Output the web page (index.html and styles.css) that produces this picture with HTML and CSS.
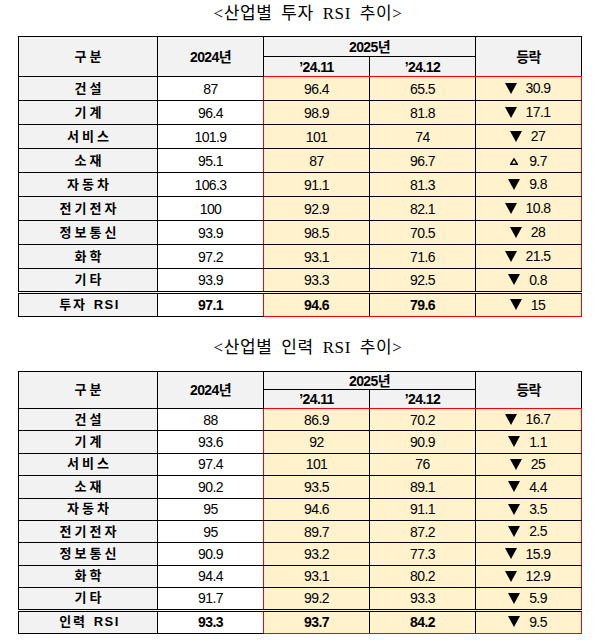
FILE: index.html
```html
<!DOCTYPE html>
<html lang="ko">
<head>
<meta charset="utf-8">
<title>산업별 RSI 추이</title>
<link rel="stylesheet" href="styles.css">
</head>
<body>
<div class="page">
  <section class="block first">
    <h2 class="title">&lt;산업별 투자 RSI 추이&gt;</h2>
    <table class="rsi t1">
      <colgroup><col class="c-lab"><col class="c-num"><col class="c-num"><col class="c-num"><col class="c-num"></colgroup>
      <thead>
        <tr class="h1">
          <th rowspan="2" class="lab">구분</th>
          <th rowspan="2" class="pre">2024년</th>
          <th colspan="2">2025년</th>
          <th rowspan="2" class="chg hb">등락</th>
        </tr>
        <tr class="h2">
          <th class="hb yl">’24.11</th>
          <th class="hb">’24.12</th>
        </tr>
      </thead>
      <tbody>
        <tr class="first-row"><td class="lab">건설</td><td class="pre">87</td><td class="y yl">96.4</td><td class="y">65.5</td><td class="y chg"><span class="d"><svg class="dn" viewBox="0 0 12 11"><path d="M0 0H12L6 11Z"/></svg>30.9</span></td></tr>
        <tr><td class="lab">기계</td><td class="pre">96.4</td><td class="y yl">98.9</td><td class="y">81.8</td><td class="y chg"><span class="d"><svg class="dn" viewBox="0 0 12 11"><path d="M0 0H12L6 11Z"/></svg>17.1</span></td></tr>
        <tr><td class="lab">서비스</td><td class="pre">101.9</td><td class="y yl">101</td><td class="y">74</td><td class="y chg"><span class="d"><svg class="dn" viewBox="0 0 12 11"><path d="M0 0H12L6 11Z"/></svg>27</span></td></tr>
        <tr><td class="lab">소재</td><td class="pre">95.1</td><td class="y yl">87</td><td class="y">96.7</td><td class="y chg"><span class="d"><svg class="up" viewBox="0 0 8 7"><path d="M4 0.9L7.3 6.3H0.7Z"/></svg>9.7</span></td></tr>
        <tr><td class="lab">자동차</td><td class="pre">106.3</td><td class="y yl">91.1</td><td class="y">81.3</td><td class="y chg"><span class="d"><svg class="dn" viewBox="0 0 12 11"><path d="M0 0H12L6 11Z"/></svg>9.8</span></td></tr>
        <tr><td class="lab">전기전자</td><td class="pre">100</td><td class="y yl">92.9</td><td class="y">82.1</td><td class="y chg"><span class="d"><svg class="dn" viewBox="0 0 12 11"><path d="M0 0H12L6 11Z"/></svg>10.8</span></td></tr>
        <tr><td class="lab">정보통신</td><td class="pre">93.9</td><td class="y yl">98.5</td><td class="y">70.5</td><td class="y chg"><span class="d"><svg class="dn" viewBox="0 0 12 11"><path d="M0 0H12L6 11Z"/></svg>28</span></td></tr>
        <tr><td class="lab">화학</td><td class="pre">97.2</td><td class="y yl">93.1</td><td class="y">71.6</td><td class="y chg"><span class="d"><svg class="dn" viewBox="0 0 12 11"><path d="M0 0H12L6 11Z"/></svg>21.5</span></td></tr>
        <tr><td class="lab">기타</td><td class="pre">93.9</td><td class="y yl">93.3</td><td class="y">92.5</td><td class="y chg"><span class="d"><svg class="dn" viewBox="0 0 12 11"><path d="M0 0H12L6 11Z"/></svg>0.8</span></td></tr>
        <tr class="total"><td class="lab"><span class="ko">투자</span> <span class="en">RSI</span></td><td class="pre b">97.1</td><td class="y yl b">94.6</td><td class="y b">79.6</td><td class="y chg"><span class="d"><svg class="dn" viewBox="0 0 12 11"><path d="M0 0H12L6 11Z"/></svg>15</span></td></tr>
      </tbody>
    </table>
  </section>

  <section class="block second">
    <h2 class="title">&lt;산업별 인력 RSI 추이&gt;</h2>
    <table class="rsi t2">
      <colgroup><col class="c-lab"><col class="c-num"><col class="c-num"><col class="c-num"><col class="c-num"></colgroup>
      <thead>
        <tr class="h1">
          <th rowspan="2" class="lab">구분</th>
          <th rowspan="2" class="pre">2024년</th>
          <th colspan="2">2025년</th>
          <th rowspan="2" class="chg hb">등락</th>
        </tr>
        <tr class="h2">
          <th class="hb yl">’24.11</th>
          <th class="hb">’24.12</th>
        </tr>
      </thead>
      <tbody>
        <tr class="first-row"><td class="lab">건설</td><td class="pre">88</td><td class="y yl">86.9</td><td class="y">70.2</td><td class="y chg"><span class="d"><svg class="dn" viewBox="0 0 12 11"><path d="M0 0H12L6 11Z"/></svg>16.7</span></td></tr>
        <tr><td class="lab">기계</td><td class="pre">93.6</td><td class="y yl">92</td><td class="y">90.9</td><td class="y chg"><span class="d"><svg class="dn" viewBox="0 0 12 11"><path d="M0 0H12L6 11Z"/></svg>1.1</span></td></tr>
        <tr><td class="lab">서비스</td><td class="pre">97.4</td><td class="y yl">101</td><td class="y">76</td><td class="y chg"><span class="d"><svg class="dn" viewBox="0 0 12 11"><path d="M0 0H12L6 11Z"/></svg>25</span></td></tr>
        <tr><td class="lab">소재</td><td class="pre">90.2</td><td class="y yl">93.5</td><td class="y">89.1</td><td class="y chg"><span class="d"><svg class="dn" viewBox="0 0 12 11"><path d="M0 0H12L6 11Z"/></svg>4.4</span></td></tr>
        <tr><td class="lab">자동차</td><td class="pre">95</td><td class="y yl">94.6</td><td class="y">91.1</td><td class="y chg"><span class="d"><svg class="dn" viewBox="0 0 12 11"><path d="M0 0H12L6 11Z"/></svg>3.5</span></td></tr>
        <tr><td class="lab">전기전자</td><td class="pre">95</td><td class="y yl">89.7</td><td class="y">87.2</td><td class="y chg"><span class="d"><svg class="dn" viewBox="0 0 12 11"><path d="M0 0H12L6 11Z"/></svg>2.5</span></td></tr>
        <tr><td class="lab">정보통신</td><td class="pre">90.9</td><td class="y yl">93.2</td><td class="y">77.3</td><td class="y chg"><span class="d"><svg class="dn" viewBox="0 0 12 11"><path d="M0 0H12L6 11Z"/></svg>15.9</span></td></tr>
        <tr><td class="lab">화학</td><td class="pre">94.4</td><td class="y yl">93.1</td><td class="y">80.2</td><td class="y chg"><span class="d"><svg class="dn" viewBox="0 0 12 11"><path d="M0 0H12L6 11Z"/></svg>12.9</span></td></tr>
        <tr><td class="lab">기타</td><td class="pre">91.7</td><td class="y yl">99.2</td><td class="y">93.3</td><td class="y chg"><span class="d"><svg class="dn" viewBox="0 0 12 11"><path d="M0 0H12L6 11Z"/></svg>5.9</span></td></tr>
        <tr class="total"><td class="lab"><span class="ko">인력</span> <span class="en">RSI</span></td><td class="pre b">93.3</td><td class="y yl b">93.7</td><td class="y b">84.2</td><td class="y chg"><span class="d"><svg class="dn" viewBox="0 0 12 11"><path d="M0 0H12L6 11Z"/></svg>9.5</span></td></tr>
      </tbody>
    </table>
  </section>
</div>
</body>
</html>
```

FILE: styles.css
```css
html, body {
  margin: 0;
  padding: 0;
  background: #ffffff;
}

body {
  font-family: "Liberation Sans", "Noto Sans CJK KR", sans-serif;
  color: #000;
}

.page {
  width: 601px;
}

.block.first {
  padding-top: 2px;
}

.block.second {
  padding-top: 19px;
}

.title {
  margin: 0 0 10px 0;
  padding-left: 15px;
  height: 24px;
  line-height: 24px;
  font-family: "Liberation Serif", "Noto Sans CJK KR", serif;
  font-weight: normal;
  font-size: 17px;
  text-align: center;
  letter-spacing: 0.6px;
  word-spacing: 4px;
}

.second .title {
  margin-bottom: 11px;
}

.rsi {
  margin-left: 18px;
  width: 564px;
  table-layout: fixed;
  border-collapse: collapse;
  font-size: 14px;
}

.c-lab { width: 139px; }
.c-num { width: 106px; }

.rsi th,
.rsi td {
  border: 1px solid #000;
  padding: 0;
  text-align: center;
  vertical-align: middle;
  line-height: 16px;
  letter-spacing: -0.6px;
}

.rsi th {
  background: #f2f2f2;
  font-weight: bold;
}

.rsi td.lab {
  background: #f2f2f2;
  font-weight: bold;
  font-size: 13px;
  letter-spacing: 3px;
  text-indent: 3px;
}

.rsi td.lab .ko {
  letter-spacing: 2px;
}

.rsi td.lab .en {
  letter-spacing: 1.5px;
}

.rsi th.lab {
  letter-spacing: 3px;
  text-indent: 3px;
  font-size: 13px;
}

.rsi td.pre {
  background: #fff;
}

.rsi td.y {
  background: #fff2cc;
}

.rsi .b {
  font-weight: bold;
}

/* red frame around the yellow block */
.rsi td.pre {
  border-right-color: #ff0000;
}
.rsi td.yl {
  border-left-color: #ff0000;
}
.rsi th.hb {
  border-bottom-color: #ff0000;
}
.rsi tr.first-row td.y {
  border-top-color: #ff0000;
}
.rsi td.chg {
  border-right-color: #ff0000;
}
.rsi tr.total td {
  border-top: 3px double #000;
}
.rsi tr.total td.y {
  border-bottom-color: #ff0000;
}

/* row heights */
.t1 tr.h1 { height: 20px; }
.t1 tr.h2 { height: 20px; }
.t1 tbody tr { height: 24px; }

.t2 tr.h1 { height: 18px; }
.t2 tr.h2 { height: 19px; }
.t2 tbody tr { height: 22.4px; }
.t2 tr.total { height: 23px; }

/* change column */
.d {
  display: inline-flex;
  align-items: center;
  gap: 9px;
  padding-right: 2px;
}

.dn {
  width: 12px;
  height: 11px;
  fill: #000;
}

.up {
  width: 8px;
  height: 7px;
  margin: 0 2px;
  fill: none;
  stroke: #000;
  stroke-width: 1.4;
}
```
